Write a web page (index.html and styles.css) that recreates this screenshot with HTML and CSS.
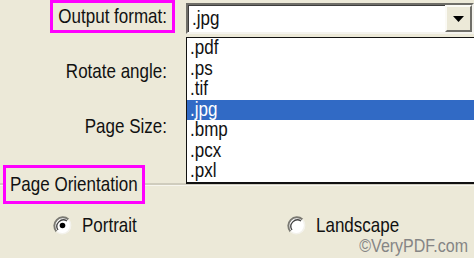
FILE: index.html
```html
<!DOCTYPE html>
<html>
<head>
<meta charset="utf-8">
<link rel="stylesheet" href="styles.css">
</head>
<body>
<div class="panel">
  <div class="row row-first">
    <div class="label-col">
      <span class="hl-box label-box"><span class="t">Output format:</span></span>
    </div>
    <div class="combo-wrap">
      <div class="combo">
        <span class="combo-text t">.jpg</span>
        <span class="combo-btn">
          <svg width="11" height="6" viewBox="0 0 11 6"><path d="M0 0 H11 L5.5 6 Z" fill="#000"/></svg>
        </span>
      </div>
      <ul class="droplist">
        <li><span class="t">.pdf</span></li>
        <li><span class="t">.ps</span></li>
        <li><span class="t">.tif</span></li>
        <li class="selected"><span class="t">.jpg</span></li>
        <li><span class="t">.bmp</span></li>
        <li><span class="t">.pcx</span></li>
        <li><span class="t">.pxl</span></li>
      </ul>
    </div>
  </div>
  <div class="row row-second">
    <div class="label-col"><span class="label t">Rotate angle:</span></div>
  </div>
  <div class="row row-third">
    <div class="label-col"><span class="label t">Page Size:</span></div>
  </div>

  <div class="group-head">
    <span class="gline gline-left"></span>
    <span class="hl-box legend"><span class="t">Page Orientation</span></span>
    <span class="gline gline-right"></span>
  </div>

  <div class="radios">
    <label class="opt opt-first">
      <svg class="radio" width="19" height="19" viewBox="0 0 19 19">
        <circle cx="9.5" cy="9.5" r="8.5" fill="#fff"/>
        <path d="M3.5 15.5 A8.5 8.5 0 0 1 15.5 3.5" fill="none" stroke="#7a7972" stroke-width="2"/>
        <path d="M5 14 A6.5 6.5 0 0 1 14 5" fill="none" stroke="#444" stroke-width="1.3"/>
        <path d="M15.5 3.5 A8.5 8.5 0 0 1 3.5 15.5" fill="none" stroke="#f3f2ec" stroke-width="1.5"/>
        <circle cx="9.5" cy="9.5" r="2.8" fill="#000"/>
      </svg>
      <span class="t">Portrait</span>
    </label>
    <label class="opt">
      <svg class="radio" width="19" height="19" viewBox="0 0 19 19">
        <circle cx="9.5" cy="9.5" r="8.5" fill="#fff"/>
        <path d="M3.5 15.5 A8.5 8.5 0 0 1 15.5 3.5" fill="none" stroke="#7a7972" stroke-width="2"/>
        <path d="M5 14 A6.5 6.5 0 0 1 14 5" fill="none" stroke="#444" stroke-width="1.3"/>
        <path d="M15.5 3.5 A8.5 8.5 0 0 1 3.5 15.5" fill="none" stroke="#f3f2ec" stroke-width="1.5"/>
      </svg>
      <span class="t">Landscape</span>
    </label>
  </div>

  <div class="watermark"><span class="t">©VeryPDF.com</span></div>
</div>
</body>
</html>
```

FILE: styles.css
```css
html, body {
  margin: 0;
  padding: 0;
}
body {
  background: #ece9d8;
  font-family: "Liberation Sans", Arial, sans-serif;
  font-size: 17px;
  color: #111;
  width: 474px;
  height: 258px;
  overflow: hidden;
}
.panel {
  position: relative;
  width: 474px;
  height: 258px;
}
.t {
  display: inline-block;
  transform: scaleY(1.16);
  transform-origin: 50% 55%;
}
.row {
  display: flex;
  align-items: flex-start;
}
.label-col {
  width: 186px;
  flex: none;
  display: flex;
  justify-content: flex-end;
}
.row-first {
  height: 37px;
}
.row-second {
  margin-top: 25px;
  height: 20px;
}
.row-third {
  margin-top: 35px;
  height: 20px;
}
.label {
  line-height: 20px;
  margin-right: 19px;
}
.hl-box {
  border: 3px solid #ff00ff;
  box-sizing: border-box;
  line-height: 20px;
}
.label-box {
  height: 33px;
  margin-right: 11px;
  padding: 4px 5px 0 5px;
}
.combo-wrap {
  position: relative;
  flex: 1;
  margin-top: 3px;
}
.combo {
  height: 31px;
  box-sizing: border-box;
  background: #fff;
  border-style: solid;
  border-width: 2px;
  border-color: #6f6e68 #f4f3ee #f4f3ee #6f6e68;
  box-shadow: inset 1px 1px 0 #3c3c3c;
  display: flex;
  align-items: center;
  justify-content: space-between;
}
.combo-text {
  padding-left: 4px;
  line-height: 20px;
}
.combo-btn {
  width: 27px;
  height: 27px;
  box-sizing: border-box;
  background: #ece9d8;
  border-style: solid;
  border-width: 2px;
  border-color: #fbfaf5 #6f6e68 #6f6e68 #fbfaf5;
  display: flex;
  align-items: center;
  justify-content: center;
}
.droplist {
  position: absolute;
  left: 0;
  top: 34px;
  width: 300px;
  margin: 0;
  padding: 0;
  list-style: none;
  background: #fff;
  border: 1px solid #111;
  border-bottom-width: 2px;
}
.droplist li {
  height: 20.5px;
  line-height: 20.5px;
  padding-left: 3px;
}
.droplist li.selected {
  background: #316ac5;
  color: #fff;
}
.group-head {
  margin-top: 28px;
  height: 39px;
  display: flex;
  align-items: center;
}
.gline {
  display: block;
  height: 0;
  border-top: 2px solid #cfccbd;
  border-bottom: 1px solid #f7f6ef;
}
.gline-left {
  width: 3px;
}
.gline-right {
  flex: 1;
}
.legend {
  height: 39px;
  padding: 0 4px;
  display: flex;
  align-items: center;
}
.radios {
  margin-top: 12px;
  display: flex;
  align-items: center;
  height: 19px;
}
.opt {
  display: flex;
  align-items: center;
  gap: 10px;
}
.opt-first {
  margin-left: 53px;
  width: 234px;
}
.radio {
  display: block;
  flex: none;
}
.watermark {
  position: absolute;
  right: 6px;
  bottom: 3px;
  font-size: 16px;
  color: #858585;
  line-height: 18px;
}
```
